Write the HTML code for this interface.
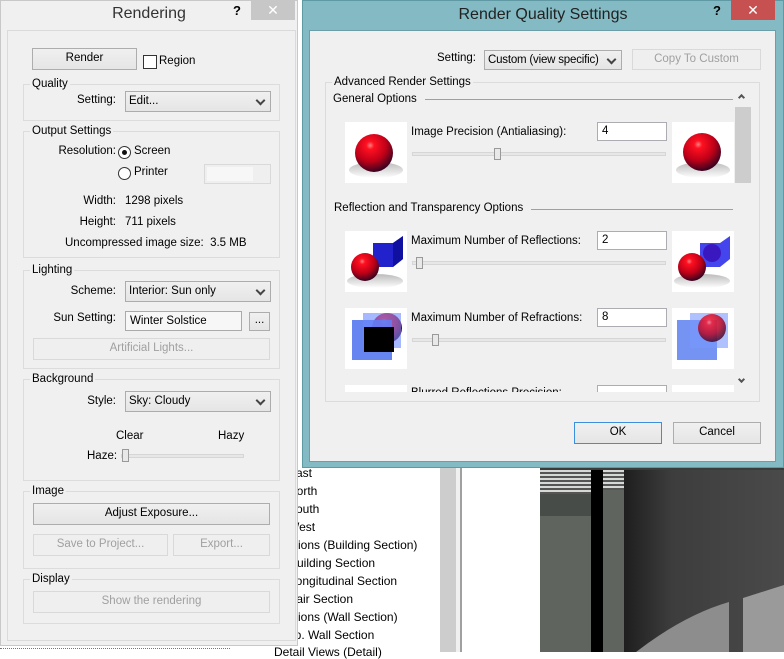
<!DOCTYPE html>
<html><head><meta charset="utf-8"><style>
*{box-sizing:border-box;margin:0;padding:0}
body{width:784px;height:652px;overflow:hidden;position:relative;background:#fff;font-family:"Liberation Sans",sans-serif;font-size:11.5px;color:#000}
.a{position:absolute;white-space:nowrap}
.btn{position:absolute;border:1px solid #adadad;background:linear-gradient(#f0f0f0,#e5e5e5);text-align:center;line-height:19px}
.dis{border-color:#d9d9d9;background:#efefef;color:#a0a0a0}
.grp{position:absolute;border:1px solid #dcdcdc}
.gl{position:absolute;top:-8px;left:6px;background:#f0f0f0;padding:0 2px;line-height:14px}
.sel{position:absolute;border:1px solid #acacac;background:linear-gradient(#f0f0f0,#e5e5e5);padding-left:3px;line-height:18px;overflow:hidden}
.sel:after{content:"";position:absolute;right:6px;top:5px;width:5px;height:5px;border-right:2px solid #444;border-bottom:2px solid #444;transform:rotate(45deg)}
.inp{position:absolute;background:#fff;border:1px solid #abadb3;padding-left:4px;line-height:17px}
.track{position:absolute;height:4px;border:1px solid #d6d6d6;background:#e7e7e7}
.thumb{position:absolute;width:7px;height:12px;border:1px solid #999;background:#e8e8e8}
.r{text-align:right}
.tree{position:absolute;font-size:12px;color:#000;white-space:nowrap}
.hd{background:#f0f0f0;padding-right:8px}
</style></head><body>

<!-- background app -->
<div class="a" style="left:296px;top:460px;width:144px;height:192px;background:#fff"></div>
<div class="a" style="left:440px;top:460px;width:16px;height:192px;background:#cdcdcd"></div>
<div class="a" style="left:456px;top:460px;width:4px;height:192px;background:#f0f0f0"></div>
<div class="a" style="left:460px;top:460px;width:2px;height:192px;background:#a0a0a0"></div>
<div class="a" style="left:462px;top:460px;width:78px;height:192px;background:#fff"></div>
<div class="a" style="left:540px;top:460px;width:244px;height:192px;background:#3b3b3b"></div>
<div class="a" style="left:540px;top:470px;width:51px;height:182px;background:#5f645e"></div>
<div class="a" style="left:540px;top:470px;width:51px;height:24px;background:repeating-linear-gradient(#d5d9d5 0 2px,#555 2px 4px)"></div>
<div class="a" style="left:540px;top:494px;width:51px;height:22px;background:#484c48"></div>
<div class="a" style="left:591px;top:470px;width:12px;height:182px;background:#000"></div>
<div class="a" style="left:603px;top:470px;width:21px;height:182px;background:#5f645e"></div>
<div class="a" style="left:603px;top:470px;width:21px;height:20px;background:repeating-linear-gradient(#d5d9d5 0 2px,#555 2px 4px)"></div>
<div class="a" style="left:624px;top:470px;width:160px;height:182px;background:linear-gradient(90deg,#1e1e1e,#3d3d3d 30%,#4a4a4a)"></div>
<svg class="a" style="left:624px;top:560px" width="160" height="92"><path d="M12 92 Q60 55 105 42 L105 92Z" fill="#8d8d8d"/><path d="M119 38 L160 25 L160 92 L119 92Z" fill="#9a9a9a"/></svg>
<div class="tree" style="left:288px;top:466px">East</div>
<div class="tree" style="left:288px;top:484px">North</div>
<div class="tree" style="left:288px;top:502px">South</div>
<div class="tree" style="left:288px;top:520px">West</div>
<div class="tree" style="left:274px;top:538px">Sections (Building Section)</div>
<div class="tree" style="left:289px;top:556px">Building Section</div>
<div class="tree" style="left:289px;top:574px">Longitudinal Section</div>
<div class="tree" style="left:285px;top:592px">Stair Section</div>
<div class="tree" style="left:274px;top:610px">Sections (Wall Section)</div>
<div class="tree" style="left:282px;top:628px">Typ. Wall Section</div>
<div class="tree" style="left:274px;top:645px">Detail Views (Detail)</div>
<div class="a" style="left:0;top:648px;width:230px;border-top:1px dotted #777"></div>

<!-- Left dialog -->
<div class="a" style="left:0;top:0;width:298px;height:646px;background:#f0f0f0;border:1px solid #c8c8c8"></div>
<div class="a" style="left:0;top:5px;width:298px;text-align:center;font-size:16px;color:#333">Rendering</div>
<div class="a" style="left:233px;top:3px;font-weight:bold;font-size:13px">?</div>
<div class="a" style="left:251px;top:0;width:44px;height:20px;background:#c7c7c7;color:#fff;text-align:center;font-size:14px;line-height:20px">✕</div>
<div class="a" style="left:7px;top:30px;width:289px;height:611px;border:1px solid #dadada;background:#f0f0f0"></div>

<div class="btn" style="left:32px;top:48px;width:105px;height:22px">Render</div>
<div class="a" style="left:143px;top:55px;width:14px;height:14px;border:1px solid #333;background:#fff"></div>
<div class="a" style="left:159px;top:55px">Region</div>

<div class="grp" style="left:23px;top:84px;width:257px;height:37px"><span class="gl">Quality</span></div>
<div class="a r" style="left:40px;top:94px;width:76px">Setting:</div>
<div class="sel" style="left:125px;top:91px;width:146px;height:21px">Edit...</div>

<div class="grp" style="left:23px;top:131px;width:257px;height:127px"><span class="gl">Output Settings</span></div>
<div class="a r" style="left:30px;top:145px;width:86px">Resolution:</div>
<div class="a" style="left:118px;top:146px;width:13px;height:13px;border:1px solid #333;border-radius:50%;background:#fff"></div>
<div class="a" style="left:122px;top:150px;width:5px;height:5px;border-radius:50%;background:#111"></div>
<div class="a" style="left:134px;top:145px">Screen</div>
<div class="a" style="left:118px;top:167px;width:13px;height:13px;border:1px solid #333;border-radius:50%;background:#fff"></div>
<div class="a" style="left:134px;top:166px">Printer</div>
<div class="a" style="left:204px;top:164px;width:67px;height:20px;border:1px solid #d9d9d9;background:#efefef"><div style="position:absolute;left:2px;top:2px;width:46px;height:14px;background:#f7f7f7"></div></div>
<div class="a r" style="left:30px;top:195px;width:86px">Width:</div>
<div class="a" style="left:125px;top:195px">1298 pixels</div>
<div class="a r" style="left:30px;top:216px;width:86px">Height:</div>
<div class="a" style="left:125px;top:216px">711 pixels</div>
<div class="a" style="left:65px;top:237px">Uncompressed image size:&nbsp; 3.5 MB</div>

<div class="grp" style="left:23px;top:270px;width:257px;height:99px"><span class="gl">Lighting</span></div>
<div class="a r" style="left:30px;top:285px;width:86px">Scheme:</div>
<div class="sel" style="left:125px;top:281px;width:146px;height:21px">Interior: Sun only</div>
<div class="a r" style="left:30px;top:312px;width:86px">Sun Setting:</div>
<div class="inp" style="left:125px;top:311px;width:117px;height:20px;background:#f7f7f7;border-color:#aaa;line-height:18px">Winter Solstice</div>
<div class="btn" style="left:249px;top:312px;width:21px;height:19px;line-height:15px">...</div>
<div class="btn dis" style="left:33px;top:338px;width:237px;height:22px">Artificial Lights...</div>

<div class="grp" style="left:23px;top:379px;width:257px;height:102px"><span class="gl">Background</span></div>
<div class="a r" style="left:30px;top:395px;width:86px">Style:</div>
<div class="sel" style="left:125px;top:391px;width:146px;height:21px">Sky: Cloudy</div>
<div class="a" style="left:116px;top:430px">Clear</div>
<div class="a" style="left:218px;top:430px">Hazy</div>
<div class="a" style="left:87px;top:450px">Haze:</div>
<div class="track" style="left:121px;top:454px;width:123px"></div>
<div class="thumb" style="left:122px;top:449px;height:13px"></div>

<div class="grp" style="left:23px;top:491px;width:257px;height:78px"><span class="gl">Image</span></div>
<div class="btn" style="left:33px;top:503px;width:237px;height:22px">Adjust Exposure...</div>
<div class="btn dis" style="left:33px;top:534px;width:135px;height:22px">Save to Project...</div>
<div class="btn dis" style="left:173px;top:534px;width:97px;height:22px">Export...</div>

<div class="grp" style="left:23px;top:579px;width:257px;height:45px"><span class="gl">Display</span></div>
<div class="btn dis" style="left:33px;top:591px;width:237px;height:22px">Show the rendering</div>

<!-- Right dialog -->
<div class="a" style="left:302px;top:0;width:482px;height:468px;background:#83bac3;border:1px solid #5f9aa4"></div>
<div class="a" style="left:302px;top:6px;width:482px;text-align:center;font-size:16px;color:#222">Render Quality Settings</div>
<div class="a" style="left:713px;top:3px;font-weight:bold;font-size:13px">?</div>
<div class="a" style="left:731px;top:0;width:44px;height:20px;background:#c75050;color:#fff;text-align:center;font-size:14px;line-height:20px">✕</div>
<div class="a" style="left:309px;top:30px;width:467px;height:432px;background:#f0f0f0;border:1px solid #6b9ea6"></div>

<div class="a r" style="left:400px;top:52px;width:76px">Setting:</div>
<div class="sel" style="left:484px;top:50px;width:138px;height:20px;letter-spacing:-0.2px">Custom (view specific)</div>
<div class="btn dis" style="left:632px;top:49px;width:129px;height:21px">Copy To Custom</div>

<div class="grp" style="left:325px;top:82px;width:435px;height:320px"><span class="gl" style="left:6px">Advanced Render Settings</span></div>
<div class="a" style="left:333px;top:99px;width:400px;border-top:1px solid #a0a0a0"></div>
<div class="a" style="left:333px;top:93px"><span class="hd">General Options</span></div>
<div class="a" style="left:735px;top:90px;width:16px;height:306px;background:#f0f0f0"></div>
<div class="a" style="left:739px;top:95px;width:5px;height:5px;border-left:2px solid #555;border-top:2px solid #555;transform:rotate(45deg)"></div>
<div class="a" style="left:735px;top:107px;width:16px;height:76px;background:#cdcdcd"></div>
<div class="a" style="left:739px;top:377px;width:5px;height:5px;border-right:2px solid #555;border-bottom:2px solid #555;transform:rotate(45deg)"></div>

<svg width="0" height="0" style="position:absolute"><defs>
<radialGradient id="rs" cx="0.4" cy="0.3" r="0.7"><stop offset="0" stop-color="#ff8080"/><stop offset="0.15" stop-color="#ff1020"/><stop offset="0.6" stop-color="#c00018"/><stop offset="1" stop-color="#3a0020"/></radialGradient>
<linearGradient id="sh" x1="0" y1="0" x2="0" y2="1"><stop offset="0" stop-color="#bbb"/><stop offset="1" stop-color="#fff"/></linearGradient>
</defs></svg>

<!-- row 1 -->
<svg class="a" style="left:345px;top:122px" width="62" height="61"><rect width="62" height="61" fill="#fff"/><ellipse cx="31" cy="48" rx="27" ry="8" fill="url(#sh)"/><circle cx="29" cy="31" r="19" fill="url(#rs)"/></svg>
<div class="a" style="left:411px;top:126px">Image Precision (Antialiasing):</div>
<div class="inp" style="left:597px;top:122px;width:70px;height:19px">4</div>
<div class="track" style="left:412px;top:152px;width:254px"></div>
<div class="thumb" style="left:494px;top:148px"></div>
<svg class="a" style="left:672px;top:122px" width="62" height="61"><rect width="62" height="61" fill="#fff"/><ellipse cx="31" cy="48" rx="27" ry="8" fill="url(#sh)"/><circle cx="30" cy="30" r="19" fill="url(#rs)"/></svg>

<div class="a" style="left:334px;top:209px;width:399px;border-top:1px solid #a0a0a0"></div>
<div class="a" style="left:334px;top:202px"><span class="hd">Reflection and Transparency Options</span></div>

<!-- row 2 -->
<svg class="a" style="left:345px;top:231px" width="62" height="61"><rect width="62" height="61" fill="#fff"/><ellipse cx="30" cy="50" rx="28" ry="7" fill="url(#sh)"/><path d="M28 12 L48 12 L58 5 L58 28 L48 36 L28 36Z" fill="#2222cc"/><path d="M48 12 L58 5 L58 28 L48 36Z" fill="#1010a0"/><circle cx="20" cy="36" r="14" fill="url(#rs)"/></svg>
<div class="a" style="left:411px;top:235px">Maximum Number of Reflections:</div>
<div class="inp" style="left:597px;top:231px;width:70px;height:19px">2</div>
<div class="track" style="left:412px;top:261px;width:254px"></div>
<div class="thumb" style="left:416px;top:257px"></div>
<svg class="a" style="left:672px;top:231px" width="62" height="61"><rect width="62" height="61" fill="#fff"/><ellipse cx="30" cy="50" rx="28" ry="7" fill="url(#sh)"/><path d="M28 12 L48 12 L58 5 L58 28 L48 36 L28 36Z" fill="#4545ee"/><circle cx="40" cy="22" r="9" fill="#3a18c0"/><circle cx="20" cy="36" r="14" fill="url(#rs)"/></svg>

<!-- row 3 -->
<svg class="a" style="left:345px;top:308px" width="62" height="61"><rect width="62" height="61" fill="#fff"/><circle cx="42" cy="20" r="15" fill="url(#rs)"/><rect x="7" y="12" width="40" height="40" fill="#4c70ee" opacity="0.85"/><rect x="18" y="5" width="38" height="35" fill="#6a88ff" opacity="0.6"/><rect x="19" y="19" width="30" height="25" fill="#000"/></svg>
<div class="a" style="left:411px;top:312px">Maximum Number of Refractions:</div>
<div class="inp" style="left:597px;top:308px;width:70px;height:19px">8</div>
<div class="track" style="left:412px;top:338px;width:254px"></div>
<div class="thumb" style="left:432px;top:334px"></div>
<svg class="a" style="left:672px;top:308px" width="62" height="61"><rect width="62" height="61" fill="#fff"/><rect x="5" y="12" width="40" height="40" fill="#5c80f0" opacity="0.85"/><rect x="18" y="5" width="38" height="35" fill="#7a98ff" opacity="0.6"/><circle cx="40" cy="20" r="14" fill="url(#rs)" opacity="0.8"/></svg>

<!-- row 4 partial -->
<div class="a" style="left:345px;top:385px;width:62px;height:7px;background:#fff"></div>
<div class="a" style="left:597px;top:385px;width:70px;height:7px;background:#fff;border:1px solid #abadb3;border-bottom:none"></div>
<div class="a" style="left:672px;top:385px;width:62px;height:7px;background:#fff"></div>
<div class="a" style="left:411px;top:386px;height:6px;overflow:hidden;line-height:14px">Blurred Reflections Precision:</div>

<div class="btn" style="left:574px;top:422px;width:88px;height:22px;border-color:#3c8fdc">OK</div>
<div class="btn" style="left:673px;top:422px;width:88px;height:22px">Cancel</div>
</body></html>
